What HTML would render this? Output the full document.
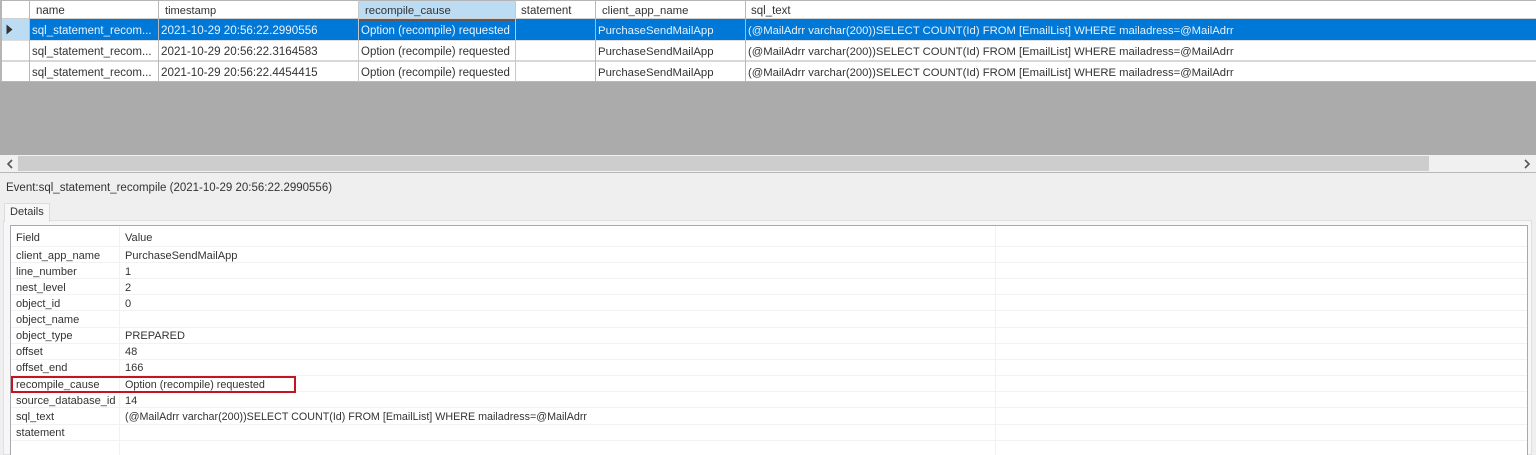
<!DOCTYPE html>
<html><head><meta charset="utf-8">
<style>
html,body{margin:0;padding:0;background:#efefef}
#p{position:relative;width:1536px;height:455px;overflow:hidden;background:#efefef;font-family:"Liberation Sans",sans-serif;font-size:11.5px;color:#333;filter:blur(.35px)}
#p div{position:absolute;box-sizing:border-box}
.t{white-space:pre;line-height:14px;height:14px}
.w{color:#e8f2fb}
.q{font-size:11.28px}
.a{font-size:11.36px}
.o{font-size:11.5px}
.d{font-size:11.05px}
.e{font-size:10.8px}
.x{font-size:10.72px}
</style></head><body><div id="p">
<div style="left:0;top:0;width:1536px;height:82px;background:#fff"></div>
<div style="left:0;top:0;width:1536px;height:1px;background:#b5b5b5"></div>
<div style="left:0;top:82px;width:1536px;height:73px;background:#ababab"></div>
<div style="left:358px;top:1px;width:157px;height:18px;background:#bcdcf4"></div>
<div style="left:2px;top:19px;width:27px;height:21px;background:#bcdcf4"></div>
<div style="left:29px;top:19px;width:1507px;height:21px;background:#0078d7"></div>
<div style="left:0;top:18px;width:1536px;height:1px;background:#d0d0d0"></div>
<div style="left:0;top:40px;width:1536px;height:1px;background:#dedede"></div>
<div style="left:0;top:60px;width:1536px;height:2px;background:#d8d8d8"></div>
<div style="left:0;top:81px;width:1536px;height:1px;background:#b8b8b8"></div>
<div style="left:0;top:0;width:2px;height:82px;background:#b5b5b5"></div>
<div style="left:29px;top:0;width:1px;height:82px;background:#b8b8b8"></div>
<div style="left:158px;top:0;width:1px;height:82px;background:#b8b8b8"></div>
<div style="left:358px;top:0;width:1px;height:82px;background:#c8c8c8"></div>
<div style="left:515px;top:0;width:1px;height:82px;background:#c8c8c8"></div>
<div style="left:595px;top:0;width:1px;height:82px;background:#b8b8b8"></div>
<div style="left:745px;top:0;width:1px;height:82px;background:#b8b8b8"></div>
<div style="left:359px;top:20px;width:156px;height:20px;border:1px dotted #5a5050"></div>
<svg style="position:absolute;left:6px;top:24px" width="7" height="11"><path d="M0.5 0.5L6.5 5.5L0.5 10.5Z" fill="#333"/></svg>
<div class="t" style="left:36px;top:4px">name</div>
<div class="t" style="left:165px;top:4px;font-size:11.1px">timestamp</div>
<div class="t" style="left:365px;top:4px;font-size:11.35px">recompile_cause</div>
<div class="t" style="left:521px;top:4px">statement</div>
<div class="t" style="left:602px;top:4px;font-size:11.35px">client_app_name</div>
<div class="t" style="left:751px;top:4px">sql_text</div>
<div class="t w" style="left:32px;top:24px">sql_statement_recom...</div>
<div class="t w" style="left:161px;top:24px;font-size:11.65px">2021-10-29 20:56:22.2990556</div>
<div class="t w o" style="left:361px;top:24px">Option (recompile) requested</div>
<div class="t w a" style="left:598px;top:24px">PurchaseSendMailApp</div>
<div class="t w q" style="left:748px;top:24px">(@MailAdrr varchar(200))SELECT COUNT(Id) FROM [EmailList] WHERE mailadress=@MailAdrr</div>
<div class="t" style="left:32px;top:45px">sql_statement_recom...</div>
<div class="t" style="left:161px;top:45px;font-size:11.65px">2021-10-29 20:56:22.3164583</div>
<div class="t o" style="left:361px;top:45px">Option (recompile) requested</div>
<div class="t a" style="left:598px;top:45px">PurchaseSendMailApp</div>
<div class="t q" style="left:748px;top:45px">(@MailAdrr varchar(200))SELECT COUNT(Id) FROM [EmailList] WHERE mailadress=@MailAdrr</div>
<div class="t" style="left:32px;top:66px">sql_statement_recom...</div>
<div class="t" style="left:161px;top:66px;font-size:11.65px">2021-10-29 20:56:22.4454415</div>
<div class="t o" style="left:361px;top:66px">Option (recompile) requested</div>
<div class="t a" style="left:598px;top:66px">PurchaseSendMailApp</div>
<div class="t q" style="left:748px;top:66px">(@MailAdrr varchar(200))SELECT COUNT(Id) FROM [EmailList] WHERE mailadress=@MailAdrr</div>

<div style="left:0;top:155px;width:1536px;height:18px;background:#f0f0f0;border-bottom:1px solid #b8b8b8"></div>
<div style="left:18px;top:156px;width:1411px;height:15px;background:#cdcdcd"></div>
<svg style="position:absolute;left:6px;top:159px" width="8" height="10"><path d="M6 1L2 5L6 9" fill="none" stroke="#555" stroke-width="1.6"/></svg>
<svg style="position:absolute;left:1523px;top:159px" width="8" height="10"><path d="M2 1L6 5L2 9" fill="none" stroke="#555" stroke-width="1.6"/></svg>

<div class="t" style="left:6px;top:181px;font-size:11.5px">Event:sql_statement_recompile (2021-10-29 20:56:22.2990556)</div>

<div style="left:3px;top:220px;width:1529px;height:235px;background:#f7f7f7;border:1px solid #e0e0e0"></div>
<div style="left:4px;top:203px;width:46px;height:19px;background:#f7f7f7;border:1px solid #dcdcdc;border-bottom:none"></div>
<div class="t d" style="left:10px;top:205px">Details</div>

<div style="left:10px;top:225px;width:1518px;height:230px;background:#fff;border:1px solid #a8a8b0;border-bottom:none"></div>
<div style="left:119px;top:226px;width:1px;height:229px;background:#f2f2f2"></div>
<div style="left:995px;top:226px;width:1px;height:229px;background:#f2f2f2"></div>
<div style="left:11px;top:246px;width:1516px;height:1px;background:#f2f2f2"></div>
<div style="left:11px;top:262px;width:1516px;height:1px;background:#f2f2f2"></div>
<div style="left:11px;top:278px;width:1516px;height:1px;background:#f2f2f2"></div>
<div style="left:11px;top:294px;width:1516px;height:1px;background:#f2f2f2"></div>
<div style="left:11px;top:310px;width:1516px;height:1px;background:#f2f2f2"></div>
<div style="left:11px;top:327px;width:1516px;height:1px;background:#f2f2f2"></div>
<div style="left:11px;top:343px;width:1516px;height:1px;background:#f2f2f2"></div>
<div style="left:11px;top:359px;width:1516px;height:1px;background:#f2f2f2"></div>
<div style="left:11px;top:375px;width:1516px;height:1px;background:#f2f2f2"></div>
<div style="left:11px;top:391px;width:1516px;height:1px;background:#f2f2f2"></div>
<div style="left:11px;top:407px;width:1516px;height:1px;background:#f2f2f2"></div>
<div style="left:11px;top:424px;width:1516px;height:1px;background:#f2f2f2"></div>
<div style="left:11px;top:440px;width:1516px;height:1px;background:#f2f2f2"></div>

<div class="t d" style="left:16px;top:231px">Field</div><div class="t d" style="left:125px;top:231px">Value</div>
<div class="t d" style="left:16px;top:249px">client_app_name</div><div class="t d" style="left:125px;top:249px">PurchaseSendMailApp</div>
<div class="t d" style="left:16px;top:265px">line_number</div><div class="t d" style="left:125px;top:265px">1</div>
<div class="t d" style="left:16px;top:281px">nest_level</div><div class="t d" style="left:125px;top:281px">2</div>
<div class="t d" style="left:16px;top:297px">object_id</div><div class="t d" style="left:125px;top:297px">0</div>
<div class="t d" style="left:16px;top:313px">object_name</div>
<div class="t d" style="left:16px;top:329px">object_type</div><div class="t d" style="left:125px;top:329px">PREPARED</div>
<div class="t d" style="left:16px;top:345px">offset</div><div class="t d" style="left:125px;top:345px">48</div>
<div class="t d" style="left:16px;top:361px">offset_end</div><div class="t d" style="left:125px;top:361px">166</div>
<div class="t d" style="left:16px;top:378px">recompile_cause</div><div class="t e" style="left:125px;top:378px">Option (recompile) requested</div>
<div class="t d" style="left:16px;top:394px">source_database_id</div><div class="t d" style="left:125px;top:394px">14</div>
<div class="t d" style="left:16px;top:410px">sql_text</div><div class="t x" style="left:125px;top:410px">(@MailAdrr varchar(200))SELECT COUNT(Id) FROM [EmailList] WHERE mailadress=@MailAdrr</div>
<div class="t d" style="left:16px;top:426px">statement</div>

<div style="left:11px;top:376px;width:285px;height:17px;border:2px solid #c4141f"></div>
</div></body></html>
